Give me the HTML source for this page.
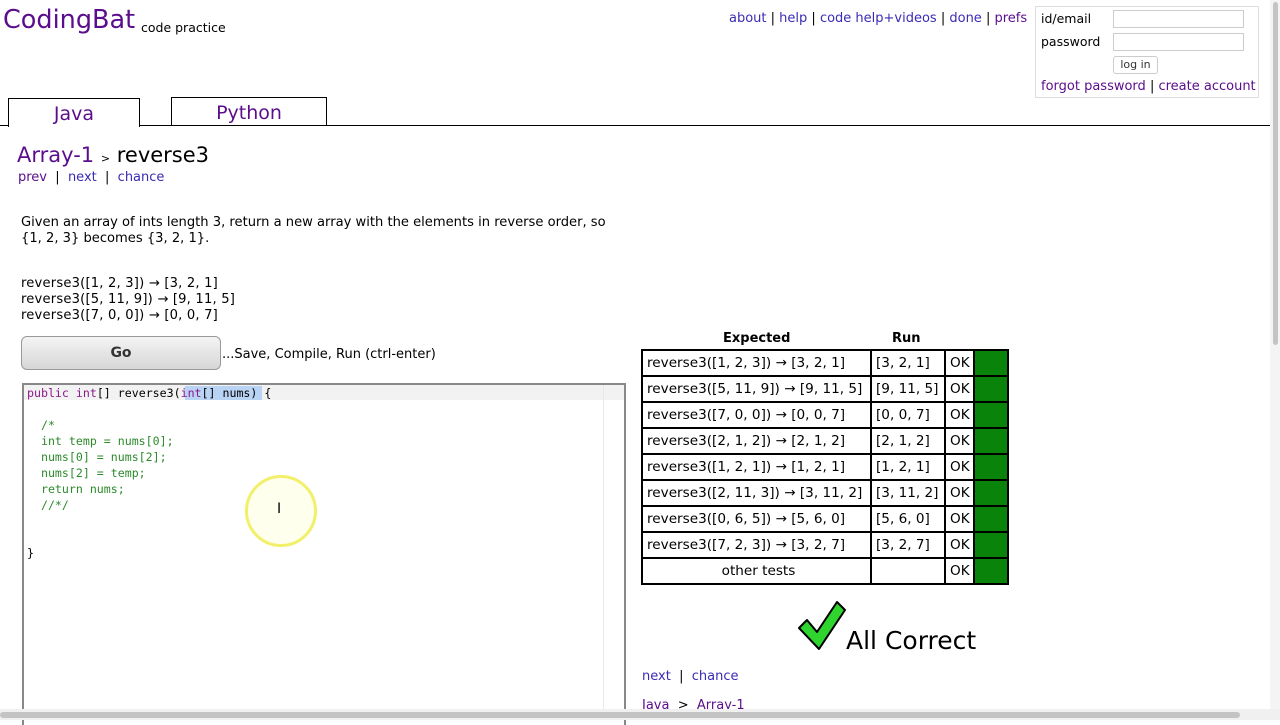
<!DOCTYPE html>
<html><head><meta charset="utf-8"><style>
body{margin:0;width:1280px;height:720px;overflow:hidden;background:#fff;font-family:"DejaVu Sans","Liberation Sans",sans-serif;position:relative;color:#000}
.a{position:absolute;white-space:nowrap}
.p{color:#5a0d8c}.b{color:#3a2bb5}
table{border-collapse:collapse;position:absolute;left:641px;top:349px;font-size:13.6px;table-layout:fixed;width:366px}
td{border:2px solid #000;height:24px;padding:0 0 0 4px;white-space:nowrap;overflow:hidden}
td.g{background:#0a830a;padding:0}
.code{position:absolute;font-family:"DejaVu Sans Mono","Liberation Mono",monospace;font-size:11.6px;color:#2c8a2c;white-space:pre;line-height:16px}
.inp{position:absolute;left:1113px;width:129px;height:16px;border:1px solid #ccc}
</style></head><body>
<div class="a p" style="left:3px;top:5px;font-size:25.5px">CodingBat</div>
<div class="a" style="left:141px;top:20px;font-size:12.5px">code practice</div>
<div class="a" style="left:729px;top:11px;font-size:13px"><span class="b">about</span> | <span class="b">help</span> | <span class="b">code help+videos</span> | <span class="b">done</span> | <span class="p">prefs</span></div>
<div class="a" style="left:1035px;top:6px;height:90px;border:1px solid #ddd;width:222px"></div>
<div class="a" style="left:1041px;top:11px;font-size:12.5px">id/email</div>
<div class="a" style="left:1041px;top:34px;font-size:12.5px">password</div>
<div class="inp" style="top:10px"></div>
<div class="inp" style="top:33px"></div>
<div class="a" style="left:1113px;top:56px;width:43px;height:16px;border:1px solid #ccc;border-radius:3px;font-size:11px;text-align:center;line-height:16px;color:#333">log in</div>
<div class="a" style="left:1041px;top:79px;font-size:13px"><span class="p">forgot password</span> | <span class="p">create account</span></div>
<div class="a" style="left:0;top:125px;width:1270px;height:1px;background:#000"></div>
<div class="a p" style="left:8px;top:98px;width:130px;height:28px;border:1px solid #000;border-bottom:none;background:#fff;font-size:19px;text-align:center;line-height:30px">Java</div>
<div class="a p" style="left:171px;top:97px;width:154px;height:27px;border:1px solid #000;font-size:19px;text-align:center;line-height:30px">Python</div>
<div class="a" style="left:17px;top:143px;font-size:21px"><span class="p">Array-1</span> <span style="font-size:11px">&gt;</span> reverse3</div>
<div class="a" style="left:18px;top:170px;font-size:13px"><span class="p">prev</span> &nbsp;| &nbsp;<span class="b">next</span> &nbsp;| &nbsp;<span class="b">chance</span></div>
<div class="a" style="left:21px;top:215px;font-size:13.1px;line-height:16px">Given an array of ints length 3, return a new array with the elements in reverse order, so<br>{1, 2, 3} becomes {3, 2, 1}.</div>
<div class="a" style="left:21px;top:276px;font-size:13.1px;line-height:16px;letter-spacing:0.2px">reverse3([1, 2, 3]) → [3, 2, 1]<br>reverse3([5, 11, 9]) → [9, 11, 5]<br>reverse3([7, 0, 0]) → [0, 0, 7]</div>
<div class="a" style="left:21px;top:336px;width:198px;height:32px;border:1px solid #999;border-radius:6px;background:linear-gradient(#f4f4f4,#d6d6d6);font-weight:bold;font-size:14px;text-align:center;line-height:33px;color:#333">Go</div>
<div class="a" style="left:222px;top:347px;font-size:13px">...Save, Compile, Run (ctrl-enter)</div>
<div class="a" style="left:22px;top:383px;width:600px;height:340px;border:2px solid #888;border-bottom:none"></div>
<div class="a" style="left:24px;top:385px;width:600px;height:15px;background:#f2f2f2"></div>
<div class="a" style="left:603px;top:385px;width:1px;height:335px;background:#e8e8e8"></div>
<div class="a" style="left:185px;top:386px;width:77px;height:14px;background:#b9d3f5"></div>
<div class="code" style="left:27px;top:385px;color:#000"><span style="color:#8b1a8b">public</span> <span style="color:#8b1a8b">int</span>[] reverse3(<span style="color:#8b1a8b">int</span>[] nums) {</div>
<div class="code" style="left:27px;top:417px">  /*
  int temp = nums[0];
  nums[0] = nums[2];
  nums[2] = temp;
  return nums;
  //*/</div>
<div class="code" style="left:27px;top:545px;color:#000">}</div>
<div class="a" style="left:245px;top:475px;width:66px;height:66px;border:3px solid #f2f06a;border-radius:50%;background:rgba(255,255,200,.3)"></div>
<div class="a" style="left:277px;top:501px;font-size:14px">I</div>
<div class="a" style="left:723px;top:331px;font-size:13px;font-weight:bold">Expected</div>
<div class="a" style="left:892px;top:331px;font-size:13px;font-weight:bold">Run</div>
<table>
<colgroup><col style="width:229px"><col style="width:74px"><col style="width:29px"><col style="width:34px"></colgroup>
<tr><td>reverse3([1, 2, 3]) → [3, 2, 1]</td><td>[3, 2, 1]</td><td>OK</td><td class="g"></td></tr>
<tr><td>reverse3([5, 11, 9]) → [9, 11, 5]</td><td>[9, 11, 5]</td><td>OK</td><td class="g"></td></tr>
<tr><td>reverse3([7, 0, 0]) → [0, 0, 7]</td><td>[0, 0, 7]</td><td>OK</td><td class="g"></td></tr>
<tr><td>reverse3([2, 1, 2]) → [2, 1, 2]</td><td>[2, 1, 2]</td><td>OK</td><td class="g"></td></tr>
<tr><td>reverse3([1, 2, 1]) → [1, 2, 1]</td><td>[1, 2, 1]</td><td>OK</td><td class="g"></td></tr>
<tr><td>reverse3([2, 11, 3]) → [3, 11, 2]</td><td>[3, 11, 2]</td><td>OK</td><td class="g"></td></tr>
<tr><td>reverse3([0, 6, 5]) → [5, 6, 0]</td><td>[5, 6, 0]</td><td>OK</td><td class="g"></td></tr>
<tr><td>reverse3([7, 2, 3]) → [3, 2, 7]</td><td>[3, 2, 7]</td><td>OK</td><td class="g"></td></tr>
<tr><td style="text-align:center">other tests</td><td></td><td>OK</td><td class="g"></td></tr>
</table>
<svg class="a" style="left:797px;top:600px" width="50" height="52" viewBox="0 0 50 52"><path d="M2 28 L10 20 L20 32 L40 2 L48 10 L22 49 Z" fill="#2fd42f" stroke="#000" stroke-width="2" stroke-linejoin="round"/></svg>
<div class="a" style="left:846px;top:626px;font-size:25px">All Correct</div>
<div class="a" style="left:642px;top:669px;font-size:13px"><span class="b">next</span> &nbsp;| &nbsp;<span class="b">chance</span></div>
<div class="a" style="left:642px;top:698px;font-size:13px"><span class="p">Java</span> &nbsp;&gt; &nbsp;<span class="p">Array-1</span></div>
<div class="a" style="left:0;top:709px;width:1280px;height:11px;background:#f0f0f0"></div>
<div class="a" style="left:0;top:712px;width:1240px;height:6px;background:#c4c4c4;border-radius:3px"></div>
<div class="a" style="left:1270px;top:0;width:10px;height:709px;background:#f4f4f4"></div>
<div class="a" style="left:1273px;top:2px;width:5px;height:343px;background:#c4c4c4;border-radius:3px"></div>
</body></html>
